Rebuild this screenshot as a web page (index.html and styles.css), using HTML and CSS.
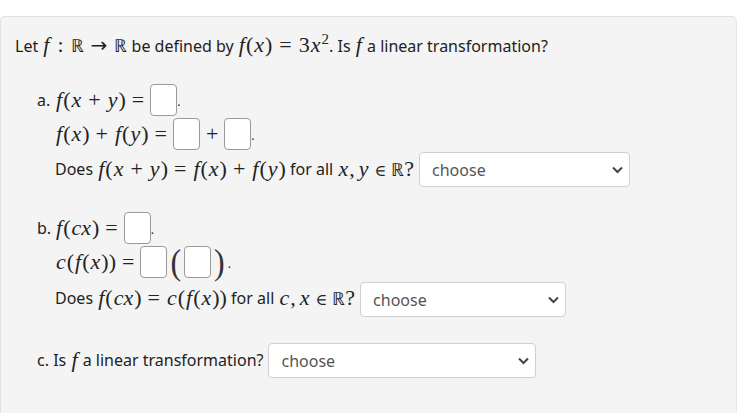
FILE: index.html
```html
<!DOCTYPE html>
<html lang="en">
<head>
    <meta charset="UTF-8">
    <title>Linear transformation question</title>
    <link rel="stylesheet" href="styles.css">
</head>
<body>
    <div class="panel">
        <p class="intro">
            Let <span class="m"><i>f</i><span class="rel">:</span><span class="bb">ℝ</span><span class="rel arrow">→</span><span class="bb">ℝ</span></span> be defined by
            <span class="m"><i>f</i>(<i>x</i>)<span class="rel">=</span>3<i>x</i><sup>2</sup></span>. Is <span class="m"><i>f</i></span> a linear transformation?
        </p>

        <!-- Part a -->
        <div class="part part-a">
            <div class="row">
                <span class="label">a.</span>
                <span class="m"><i>f</i>(<i>x</i><span class="bin">+</span><i>y</i>)<span class="rel">=</span></span><span class="blank"></span><span class="dot">.</span>
            </div>
            <div class="row indent">
                <span class="m"><i>f</i>(<i>x</i>)<span class="bin">+</span><i>f</i>(<i>y</i>)<span class="rel">=</span></span><span class="blank"></span><span class="m"><span class="bin">+</span></span><span class="blank"></span><span class="dot">.</span>
            </div>
            <div class="row indent">
                Does&nbsp;<span class="m"><i>f</i>(<i>x</i><span class="bin">+</span><i>y</i>)<span class="rel">=</span><i>f</i>(<i>x</i>)<span class="bin">+</span><i>f</i>(<i>y</i>)</span>&nbsp;for all&nbsp;<span class="m"><i>x</i>,<span class="sp"></span><i>y</i><span class="rel elem">∈</span><span class="bb">ℝ</span>?</span>
                <div class="select-wrap w-a">
                    <select><option>choose</option></select>
                    <svg class="chev" width="12" height="8" viewBox="0 0 12 8"><path d="M1 1.5 L5.5 6 L10 1.5" fill="none" stroke="#444" stroke-width="2"/></svg>
                </div>
            </div>
        </div>

        <!-- Part b -->
        <div class="part part-b">
            <div class="row">
                <span class="label">b.</span>
                <span class="m"><i>f</i>(<i>cx</i>)<span class="rel">=</span></span><span class="blank"></span><span class="dot">.</span>
            </div>
            <div class="row indent">
                <span class="m"><i>c</i>(<i>f</i>(<i>x</i>))<span class="rel">=</span></span><span class="blank"></span><span class="paren">(</span><span class="blank"></span><span class="paren">)</span><span class="dot">.</span>
            </div>
            <div class="row indent">
                Does&nbsp;<span class="m"><i>f</i>(<i>cx</i>)<span class="rel">=</span><i>c</i>(<i>f</i>(<i>x</i>))</span>&nbsp;for all&nbsp;<span class="m"><i>c</i>,<span class="sp"></span><i>x</i><span class="rel elem">∈</span><span class="bb">ℝ</span>?</span>
                <div class="select-wrap w-b">
                    <select><option>choose</option></select>
                    <svg class="chev" width="12" height="8" viewBox="0 0 12 8"><path d="M1 1.5 L5.5 6 L10 1.5" fill="none" stroke="#444" stroke-width="2"/></svg>
                </div>
            </div>
        </div>

        <!-- Part c -->
        <div class="part part-c">
            <div class="row">
                c. Is&nbsp;<span class="m"><i>f</i></span>&nbsp;a linear transformation?
                <div class="select-wrap w-c">
                    <select><option>choose</option></select>
                    <svg class="chev" width="12" height="8" viewBox="0 0 12 8"><path d="M1 1.5 L5.5 6 L10 1.5" fill="none" stroke="#444" stroke-width="2"/></svg>
                </div>
            </div>
        </div>
    </div>
</body>
</html>
```

FILE: styles.css
```css
/* Page */
body {
    margin: 0;
    background-color: #fff;
    font-family: "Noto Sans", "Open Sans", Arial, sans-serif;
    font-size: 16px;
    color: #222;
    overflow: hidden;
}

/* Question panel */
.panel {
    margin-top: 16px;
    margin-right: 3px;
    height: 400px;
    background-color: #f4f4f4;
    border-top: 1px solid #e2e2e2;
    border-left: 1px solid #e2e2e2;
    border-right: 1px solid #e8e8e8;
    border-radius: 5px 5px 0 0;
    padding: 0 0 0 14px;
}

.intro {
    margin: 0;
    padding-top: 16px;
    line-height: 24px;
}

/* Math */
.m {
    font-family: "Liberation Serif", "DejaVu Serif", serif;
    font-size: 22px;
    white-space: nowrap;
}

.m i {
    font-style: italic;
    padding: 0 1px;
}

.m sup {
    font-size: 15px;
    line-height: 0;
}

.bb {
    font-family: "DejaVu Sans", sans-serif;
    font-size: 18px;
    font-weight: 300;
}

.arrow {
    font-family: "DejaVu Sans", sans-serif;
    font-size: 20px;
}

.elem {
    font-family: "DejaVu Serif", serif;
    font-size: 16px;
}

.sp {
    display: inline-block;
    width: 3px;
}

.rel {
    margin: 0 6px;
    font-style: normal;
}

.intro .rel {
    margin: 0 7px;
}

.rel.elem {
    margin: 0 5px;
}

.bin {
    margin: 0 6px;
}

/* Parts */
.part {
    padding-left: 22px;
}

.part-a { margin-top: 25px; }
.part-b { margin-top: 24px; }
.part-c { margin-top: 25px; }

.row {
    display: flex;
    align-items: center;
    white-space: nowrap;
    min-height: 33px;
    margin-bottom: 1px;
}

.label {
    width: 18px;
}

.indent {
    padding-left: 18px;
}

.blank {
    display: inline-block;
    width: 25px;
    height: 30px;
    background-color: #fff;
    border: 1px solid #9a9a9a;
    border-radius: 4px;
}

.dot {
    align-self: flex-end;
    margin-bottom: 6px;
    font-size: 12px;
}

.paren {
    font-family: "Liberation Serif", serif;
    font-size: 32px;
    line-height: 32px;
    transform: scaleY(1.1);
    margin: 0 3px;
    color: #333;
}

/* Selects */
.select-wrap {
    position: relative;
    margin-left: 5px;
    margin-top: 1px;
}

.part-b .select-wrap {
    margin-top: 3px;
}

.select-wrap select {
    appearance: none;
    -webkit-appearance: none;
    width: 100%;
    height: 35px;
    padding: 0 0 0 12px;
    background-color: #fff;
    border: 1px solid #cfcfcf;
    border-radius: 4px;
    font-family: "Noto Sans", "Open Sans", Arial, sans-serif;
    font-size: 16px;
    color: #555;
}

.chev {
    position: absolute;
    right: 6px;
    top: 14px;
    pointer-events: none;
}

.w-a { width: 211px; }
.w-b { width: 206px; }
.w-c { width: 268px; }
```
